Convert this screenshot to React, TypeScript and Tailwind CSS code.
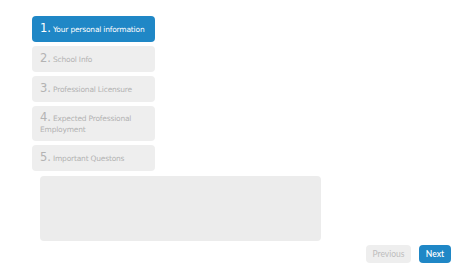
const steps = [
  { n: 1, label: "Your personal information" },
  { n: 2, label: "School Info" },
  { n: 3, label: "Professional Licensure" },
  { n: 4, label: "Expected Professional Employment" },
  { n: 5, label: "Important Questons" },
];

export default function App() {
  const active = 1;

  return (
    <div className="w-[474px] h-[269px] bg-white font-['DejaVu_Sans',Verdana,sans-serif]">
      <div className="pt-4 pl-8 flex flex-col gap-1 w-[155px]">
        {steps.map((s) => (
          <div
            key={s.n}
            className={
              s.n === active
                ? "bg-[#1f87c6] text-white rounded pl-2 pr-[6px] py-[6px] text-[7.5px] tracking-[-0.2px] leading-[11px] min-h-[26px] flex items-center"
                : "bg-[#eeeeee] text-[#b3b3b3] rounded pl-2 pr-[6px] py-[6px] text-[7.5px] tracking-[-0.2px] leading-[11px] min-h-[26px] flex items-center"
            }
          >
            <span className="w-full">
              <span className="text-[11.5px] leading-[11px] tracking-normal mr-[2px]">{s.n}.</span>
              {s.label}
            </span>
          </div>
        ))}
      </div>
      <div className="ml-10 mt-[5px] w-[281px] h-[65px] bg-[#ececec] rounded-sm" />
      <div className="flex justify-end gap-2 pr-[23px] mt-[4px] font-['Lato',sans-serif]">
        <button className="w-[45px] h-[18px] bg-[#eeeeee] text-[#bdbdbd] text-[8.5px] rounded-sm">
          Previous
        </button>
        <button className="w-[32px] h-[18px] bg-[#1f87c6] text-white text-[8.5px] font-semibold rounded-sm">
          Next
        </button>
      </div>
    </div>
  );
}
